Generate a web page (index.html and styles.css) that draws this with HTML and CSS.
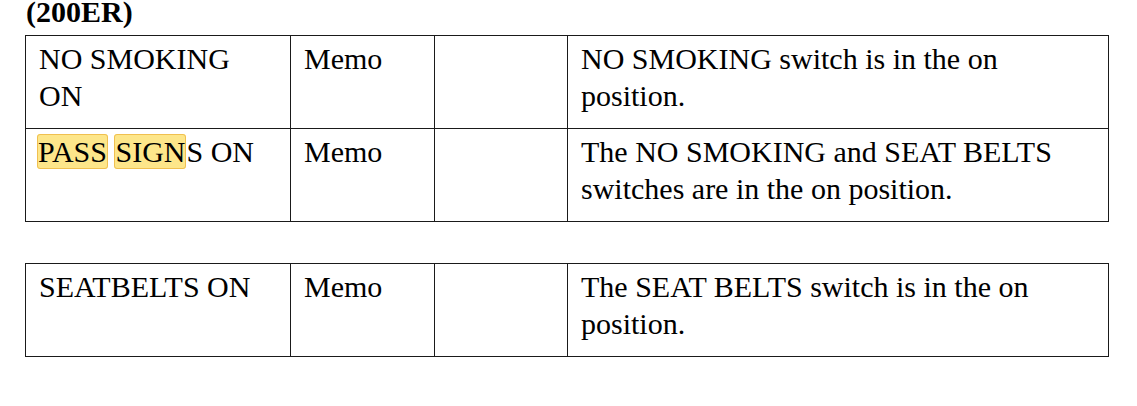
FILE: index.html
```html
<!DOCTYPE html>
<html>
<head>
<meta charset="utf-8">
<link rel="stylesheet" href="styles.css">
</head>
<body>
<div class="page">
  <div class="heading">(200ER)</div>
  <table class="memo-table">
    <colgroup>
      <col class="c1"><col class="c2"><col class="c3"><col class="c4">
    </colgroup>
    <tr>
      <td>NO SMOKING ON</td>
      <td>Memo</td>
      <td></td>
      <td>NO SMOKING switch is in the on position.</td>
    </tr>
    <tr>
      <td><span class="hl">PASS</span> <span class="hl">SIGN</span>S ON</td>
      <td>Memo</td>
      <td></td>
      <td>The NO SMOKING and SEAT BELTS switches are in the on position.</td>
    </tr>
  </table>
  <table class="memo-table second">
    <colgroup>
      <col class="c1"><col class="c2"><col class="c3"><col class="c4">
    </colgroup>
    <tr>
      <td>SEATBELTS ON</td>
      <td>Memo</td>
      <td></td>
      <td>The SEAT BELTS switch is in the on position.</td>
    </tr>
  </table>
</div>
</body>
</html>
```
FILE: styles.css
```css
html, body {
  margin: 0;
  padding: 0;
  background: #ffffff;
}
.page {
  padding-left: 25px;
  font-family: "Liberation Serif", "Times New Roman", serif;
  font-size: 30px;
  color: #000;
}
.heading {
  font-weight: bold;
  line-height: 24px;
  height: 24px;
  padding-left: 1px;
}
.memo-table {
  margin-top: 11px;
  border-collapse: collapse;
  width: 1083px;
  table-layout: fixed;
}
.memo-table.second {
  margin-top: 41px;
}
.c1 { width: 265px; }
.c2 { width: 144px; }
.c3 { width: 133px; }
.c4 { width: 541px; }
.memo-table tr {
  height: 93px;
}
.memo-table td {
  border: 1.5px solid #1a1a1a;
  vertical-align: top;
  padding: 4px 16px 0 13px;
  line-height: 37px;
  height: 93px;
  box-sizing: border-box;
}
.hl {
  background: #fde68a;
  border: 1px solid #f0c050;
  border-radius: 3px;
  padding: 0;
  margin-left: -2px;
}
.hl + .hl {
  margin-left: -1px;
}
```
